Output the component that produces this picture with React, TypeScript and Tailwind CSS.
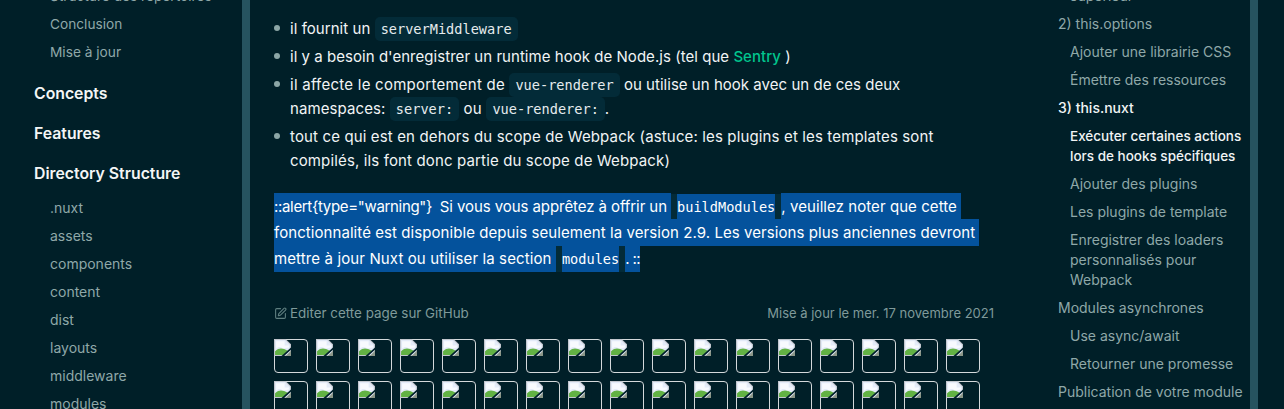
import React from 'react';
import { SquarePen } from 'lucide-react';

const LEFT_SUB = ['Structure des répertoires', 'Conclusion', 'Mise à jour'];
const LEFT_DIRS = ['.nuxt', 'assets', 'components', 'content', 'dist', 'layouts', 'middleware', 'modules'];

const TOC: { label: string[]; sub?: boolean; active?: boolean }[] = [
  { label: ['supérieur'], sub: true },
  { label: ['2) this.options'] },
  { label: ['Ajouter une librairie CSS'], sub: true },
  { label: ['Émettre des ressources'], sub: true },
  { label: ['3) this.nuxt'], active: true },
  { label: ['Exécuter certaines actions', 'lors de hooks spécifiques'], sub: true, active: true },
  { label: ['Ajouter des plugins'], sub: true },
  { label: ['Les plugins de template'], sub: true },
  { label: ['Enregistrer des loaders', 'personnalisés pour', 'Webpack'], sub: true },
  { label: ['Modules asynchrones'] },
  { label: ['Use async/await'], sub: true },
  { label: ['Retourner une promesse'], sub: true },
  { label: ['Publication de votre module'] },
];

function Code({ children }: { children: React.ReactNode }) {
  return (
    <code className="rounded-[5px] bg-[#032b38] px-[6px] py-[4px] font-['DejaVu_Sans_Mono',monospace] text-[13.6px] leading-none tracking-normal text-[#e6ecee]">
      {children}
    </code>
  );
}

function SelectedCode({ children }: { children: React.ReactNode }) {
  return (
    <code className="border-x-[6px] border-[#032b38] bg-[#04529c] py-[5px] font-['DejaVu_Sans_Mono',monospace] text-[13.6px] leading-none tracking-normal">
      {children}
    </code>
  );
}

function Bullet({ className, children }: { className: string; children: React.ReactNode }) {
  return (
    <li className={`relative pl-[16px] ${className}`}>
      <span className="absolute left-0 top-[8px] h-[6px] w-[6px] rounded-full bg-[#8ca6a6]" />
      {children}
    </li>
  );
}

// chrome's broken image placeholder
function BrokenImage() {
  return (
    <div className="h-[34px] w-[34px] rounded-[4px] border border-[#d4d9db]">
      <svg width="17" height="17" viewBox="0 0 16 16" className="-ml-px -mt-px block">
        <path d="M0 0H11L16 5V16H0Z" fill="#c3c7ce" />
        <path d="M1 1H10.5L15 5.5V15H1Z" fill="#e4ebf8" />
        <path d="M2 2H10V6H14V8L9 9C6 7 4 7 2 9Z" fill="#f8fafe" />
        <path d="M1 15V11.5C4 8.5 7 8.5 9.5 9.5L13 11L9 15H1Z" fill="#62b244" />
        <path d="M7 16L16 8V10L9.5 16Z" fill="#00212b" />
        <path d="M16 11V16H11Z" fill="#8b9688" />
      </svg>
    </div>
  );
}

export default function App() {
  return (
    <div className="flex h-screen overflow-hidden bg-[#001f28] font-['Inter',sans-serif] text-[15px] text-white">
      {/* Left nav */}
      <aside className="w-[242px] shrink-0 pl-[34px] text-[14px] text-[#8fa8a8]">
        <div className="-mt-[18px] flex flex-col pl-[16px] text-[13.7px] leading-[28px]">
          {LEFT_SUB.map((item) => (
            <span key={item} className="whitespace-nowrap">
              {item}
            </span>
          ))}
        </div>
        <div className="mt-[15px] flex flex-col gap-[14px] text-[15.8px] font-semibold leading-[26px] text-[#f4f6f6]">
          <span>Concepts</span>
          <span>Features</span>
          <span>Directory Structure</span>
        </div>
        <div className="mt-[7px] flex flex-col pl-[16px] leading-[28px]">
          {LEFT_DIRS.map((item) => (
            <span key={item}>{item}</span>
          ))}
        </div>
      </aside>

      {/* Article + table of contents */}
      <main className="flex w-[1016px] shrink-0 border-x-[8px] border-[#26535f] pl-[24px]">
        <div className="w-[720px] shrink-0">
          <ul className="mt-[17px] flex flex-col gap-[4px] leading-[24px] text-[#f1f4f5]">
            <Bullet className="tracking-[0.05px]">
              il fournit un <Code>serverMiddleware</Code>
            </Bullet>
            <Bullet className="tracking-[0.04px]">
              il y a besoin d'enregistrer un runtime hook de Node.js (tel que{' '}
              <span className="font-medium text-[#00c58e]">Sentry</span> )
            </Bullet>
            <Bullet className="tracking-[0.25px]">
              il affecte le comportement de <Code>vue-renderer</Code>
              <span className="tracking-[0.03px]"> ou utilise un hook avec un de ces deux</span>
              <br />
              <span className="tracking-[0.1px]">namespaces: </span>
              <Code>server:</Code> ou <Code>vue-renderer:</Code>.
            </Bullet>
            <Bullet className="tracking-[0.14px]">
              tout ce qui est en dehors du scope de Webpack (astuce: les plugins et les templates sont
              <br />
              compilés, ils font donc partie du scope de Webpack)
            </Bullet>
          </ul>

          <p className="mt-[21px] leading-[26px] tracking-[0.07px] text-white">
            <span className="bg-[#04529c] py-[4px] tracking-[-0.08px]">
              <span className="tracking-[-0.33px]">::alert&#123;type="warning"&#125; &nbsp;</span>Si vous vous apprêtez à
              offrir un{' '}
            </span>
            <SelectedCode>buildModules</SelectedCode>
            <span className="bg-[#04529c] py-[4px] pr-[4px]">, veuillez noter que cette</span>
            <br />
            <span className="bg-[#04529c] py-[4px] pr-[4px]">
              fonctionnalité est disponible depuis seulement la version 2.9. Les versions plus anciennes devront
            </span>
            <br />
            <span className="bg-[#04529c] py-[4px] tracking-[0.12px]">mettre à jour Nuxt ou utiliser la section </span>
            <SelectedCode>modules</SelectedCode>
            <span className="bg-[#04529c] py-[4px] tracking-[-0.6px]">. ::</span>
          </p>

          <div className="mt-[29px] flex items-center justify-between leading-[24px] text-[#7f9a9a]">
            <span className="flex items-center gap-[3px] text-[13.4px]">
              <SquarePen size={13} className="text-[#5f7f80]" />
              Editer cette page sur GitHub
            </span>
            <span className="text-[13px]">Mise à jour le mer. 17 novembre 2021</span>
          </div>

          <div className="mt-[14px] flex flex-wrap gap-[8px]">
            {Array.from({ length: 34 }).map((_, i) => (
              <BrokenImage key={i} />
            ))}
          </div>
        </div>

        {/* Table of contents */}
        <nav className="-mt-[18px] ml-[64px] flex min-w-0 flex-1 flex-col text-[14px] leading-[20px] text-[#8fa8a8]">
          {TOC.map((item) => (
            <div
              key={item.label[0]}
              className={`${item.sub ? 'pl-[12px]' : ''} ${item.active ? 'font-medium text-[#f1f4f5]' : ''} ${item.sub && item.active ? 'text-[13.5px]' : ''} whitespace-nowrap py-[4px]`}
            >
              {item.label.map((line) => (
                <div key={line}>{line}</div>
              ))}
            </div>
          ))}
        </nav>
      </main>
    </div>
  );
}
